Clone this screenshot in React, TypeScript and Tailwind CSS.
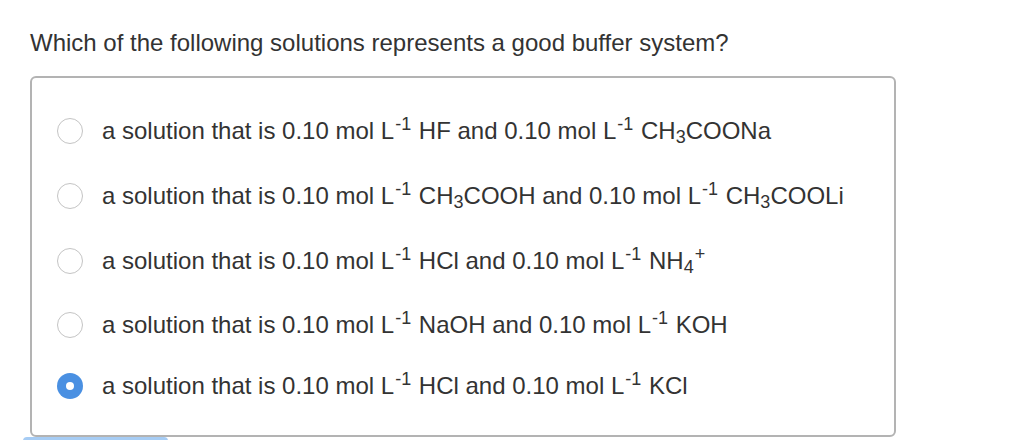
import React from "react";

const Sup = ({ children }: { children: React.ReactNode }) => (
  <span className="text-[18px] relative -top-[9px] leading-none ml-[1px] mr-[1px]">{children}</span>
);
const Sub = ({ children }: { children: React.ReactNode }) => (
  <span className="text-[18px] relative top-[4px] leading-none">{children}</span>
);

const rows: { h: string; checked: boolean; content: React.ReactNode }[] = [
  {
    h: "h-[65px]",
    checked: false,
    content: (
      <>
        a solution that is 0.10 mol L<Sup>-1</Sup> HF and 0.10 mol L<Sup>-1</Sup> CH<Sub>3</Sub>COONa
      </>
    ),
  },
  {
    h: "h-[65px]",
    checked: false,
    content: (
      <>
        a solution that is 0.10 mol L<Sup>-1</Sup> CH<Sub>3</Sub>COOH and 0.10 mol L<Sup>-1</Sup> CH<Sub>3</Sub>COOLi
      </>
    ),
  },
  {
    h: "h-[65px]",
    checked: false,
    content: (
      <>
        a solution that is 0.10 mol L<Sup>-1</Sup> HCl and 0.10 mol L<Sup>-1</Sup> NH<Sub>4</Sub>
        <Sup>+</Sup>
      </>
    ),
  },
  {
    h: "h-[63px]",
    checked: false,
    content: (
      <>
        a solution that is 0.10 mol L<Sup>-1</Sup> NaOH and 0.10 mol L<Sup>-1</Sup> KOH
      </>
    ),
  },
  {
    h: "h-[59px]",
    checked: true,
    content: (
      <>
        a solution that is 0.10 mol L<Sup>-1</Sup> HCl and 0.10 mol L<Sup>-1</Sup> KCl
      </>
    ),
  },
];

export default function App() {
  return (
    <div
      className="w-[1024px] h-[440px] bg-white overflow-hidden text-[#333]"
      style={{ fontFamily: '"Liberation Sans", Arial, sans-serif' }}
    >
      <div className="pt-[29px] pl-[30px] text-[24px] leading-[28px]">
        Which of the following solutions represents a good buffer system?
      </div>
      <div className="mt-[19px] ml-[30px] w-[866px] border-2 border-[#b3b3b3] rounded-[6px] pt-[20px] pb-[20px]">
        {rows.map((r, i) => (
          <div key={i} className={`${r.h} flex items-center pl-[25px]`}>
            {r.checked ? (
              <span className="w-[26px] h-[26px] rounded-full bg-[#4a90e2] flex items-center justify-center shrink-0">
                <span className="w-[8px] h-[8px] rounded-full bg-white" />
              </span>
            ) : (
              <span className="w-[26px] h-[26px] rounded-full border border-[#c4c4c4] bg-white shrink-0" />
            )}
            <span className="ml-[19px] text-[24px] leading-[28px] whitespace-nowrap">{r.content}</span>
          </div>
        ))}
      </div>
      <div className="ml-[23px] w-[145px] h-[10px] rounded-t-[4px] bg-[#a6ccf4]" />
    </div>
  );
}
